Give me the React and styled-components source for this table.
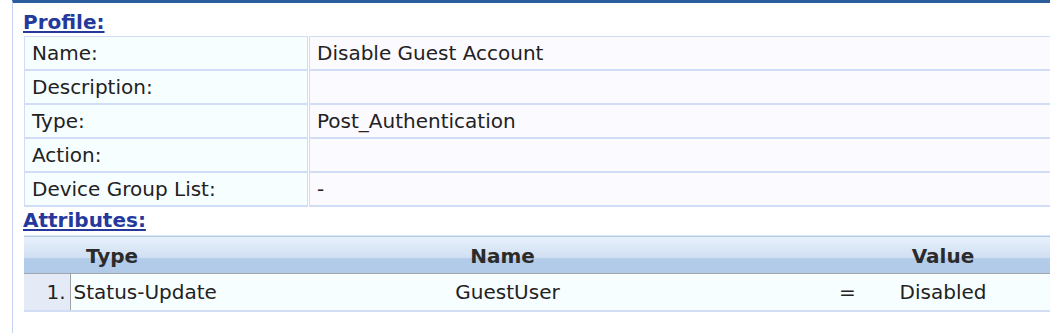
import React from "react";
import styled, { createGlobalStyle } from "styled-components";

const GlobalStyle = createGlobalStyle`
  body {
    margin: 0;
    background: #ffffff;
    overflow: hidden;
    font-family: "DejaVu Sans", Verdana, sans-serif;
    color: #222222;
  }
`;

const Page = styled.div`
  margin-left: 12px;
  width: 1100px;
  min-height: 333px;
  border-top: 3px solid #2b5d9c;
  border-left: 1px solid #c3d2f0;
  padding: 6px 0 0 10px;
  box-sizing: border-box;
`;

const SectionTitle = styled.a`
  display: block;
  font-size: 20px;
  font-weight: bold;
  line-height: 27px;
  color: #24399b;
  text-decoration: underline;
  text-underline-offset: 2px;
  cursor: pointer;
`;

const InfoTable = styled.table`
  border-collapse: separate;
  border-spacing: 1px 0;
  width: 1060px;
  font-size: 20px;
`;

const Cell = styled.td`
  height: 32px;
  padding: 0 0 0 7px;
  border: 1px solid #d0ddf4;
  border-top-width: ${(p) => (p.$first ? "1px" : "0")};
  border-bottom-width: 2px;
  background: ${(p) => (p.$label ? "#f7feff" : "#fbfbff")};
  width: ${(p) => (p.$label ? "275px" : "auto")};
  vertical-align: middle;
  white-space: nowrap;
`;

const AttrTable = styled.table`
  border-collapse: collapse;
  table-layout: fixed;
  width: 1060px;
  margin: 1px 0 0 1px;
  font-size: 20px;
  border-bottom: 2px solid #d2def5;
`;

const HeadRow = styled.tr`
  height: 38px;
  background: linear-gradient(
    to bottom,
    #e8f1fb 0%,
    #cfdff2 58%,
    #b3cce9 60%,
    #b1cae8 100%
  );
  border-top: 1px solid #dce7f6;
  border-bottom: 1px solid #a3a7ad;
`;

const HeadCell = styled.th`
  font-weight: bold;
  color: #2b2b2b;
  padding: 3px 0 0 ${(p) => p.$pad || 0}px;
  text-align: ${(p) => p.$align || "center"};
  white-space: nowrap;
`;

const DataRow = styled.tr`
  height: 37px;
  background: #f7feff;
`;

const NumCell = styled.td`
  background: #e5ebf6;
  border-right: 1px solid #a0a0a0;
  text-align: right;
  padding: 0 4px 0 0;
`;

const DataCell = styled.td`
  text-align: ${(p) => p.$align || "center"};
  padding: 0 0 0 ${(p) => p.$pad || 0}px;
  white-space: nowrap;
`;

const profile = [
  ["Name:", "Disable Guest Account"],
  ["Description:", ""],
  ["Type:", "Post_Authentication"],
  ["Action:", ""],
  ["Device Group List:", "-"],
];

const attributes = [
  { type: "Status-Update", name: "GuestUser", op: "=", value: "Disabled" },
];

const colWidths = [46, 110, 645, 45, 146, 68];

export default function App() {
  return (
    <>
      <GlobalStyle />
      <Page>
        <SectionTitle>Profile:</SectionTitle>
        <InfoTable>
          <tbody>
            {profile.map((r, i) => (
              <tr key={i}>
                <Cell $label $first={i === 0}>{r[0]}</Cell>
                <Cell $first={i === 0}>{r[1]}</Cell>
              </tr>
            ))}
          </tbody>
        </InfoTable>

        <SectionTitle>Attributes:</SectionTitle>
        <AttrTable>
          <colgroup>
            {colWidths.map((w, i) => (
              <col key={i} style={{ width: w }} />
            ))}
          </colgroup>
          <thead>
            <HeadRow>
              <HeadCell></HeadCell>
              <HeadCell $align="left" $pad={16}>Type</HeadCell>
              <HeadCell>Name</HeadCell>
              <HeadCell></HeadCell>
              <HeadCell>Value</HeadCell>
              <HeadCell></HeadCell>
            </HeadRow>
          </thead>
          <tbody>
            {attributes.map((a, i) => (
              <DataRow key={i}>
                <NumCell>{i + 1}.</NumCell>
                <DataCell $align="left" $pad={3}>{a.type}</DataCell>
                <DataCell $pad={10}>{a.name}</DataCell>
                <DataCell>{a.op}</DataCell>
                <DataCell>{a.value}</DataCell>
                <DataCell></DataCell>
              </DataRow>
            ))}
          </tbody>
        </AttrTable>
      </Page>
    </>
  );
}
